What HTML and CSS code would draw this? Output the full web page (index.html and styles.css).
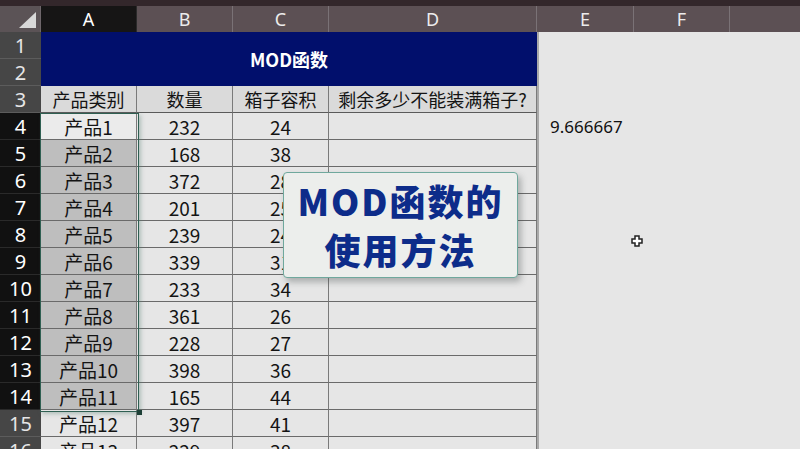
FILE: index.html
```html
<!DOCTYPE html>
<html lang="zh">
<head>
<meta charset="utf-8">
<link rel="stylesheet" href="styles.css">
</head>
<body>
<div class="topstrip"></div>
<div class="sheet">
  <div class="grid">
    <div class="corner"><svg width="41" height="26" viewBox="0 0 41 26"><polygon points="36,6 36,22 19,22" fill="#d8d8d8"/></svg></div>
    <div class="ch active">A</div>
    <div class="ch">B</div>
    <div class="ch">C</div>
    <div class="ch">D</div>
    <div class="ch">E</div>
    <div class="ch">F</div>
    <div class="ch last"></div>

    <div class="rh">1</div>
    <div class="title">MOD函数</div>
    <div class="blank span3"></div>
    <div class="rh">2</div>
    <div class="blank span3"></div>

    <div class="rh">3</div>
    <div class="c hd">产品类别</div>
    <div class="c hd">数量</div>
    <div class="c hd">箱子容积</div>
    <div class="c hd">剩余多少不能装满箱子?</div>
    <div class="blank span3"></div>

    <div class="rh sel">4</div>
    <div class="c act">产品1</div>
    <div class="c">232</div>
    <div class="c">24</div>
    <div class="c"></div>
    <div class="blank span3 val">9.666667</div>

    <div class="rh sel">5</div>
    <div class="c s">产品2</div><div class="c">168</div><div class="c">38</div><div class="c"></div><div class="blank span3"></div>
    <div class="rh sel">6</div>
    <div class="c s">产品3</div><div class="c">372</div><div class="c">28</div><div class="c"></div><div class="blank span3"></div>
    <div class="rh sel">7</div>
    <div class="c s">产品4</div><div class="c">201</div><div class="c">25</div><div class="c"></div><div class="blank span3"></div>
    <div class="rh sel">8</div>
    <div class="c s">产品5</div><div class="c">239</div><div class="c">24</div><div class="c"></div><div class="blank span3"></div>
    <div class="rh sel">9</div>
    <div class="c s">产品6</div><div class="c">339</div><div class="c">31</div><div class="c"></div><div class="blank span3"></div>
    <div class="rh sel">10</div>
    <div class="c s">产品7</div><div class="c">233</div><div class="c">34</div><div class="c"></div><div class="blank span3"></div>
    <div class="rh sel">11</div>
    <div class="c s">产品8</div><div class="c">361</div><div class="c">26</div><div class="c"></div><div class="blank span3"></div>
    <div class="rh sel">12</div>
    <div class="c s">产品9</div><div class="c">228</div><div class="c">27</div><div class="c"></div><div class="blank span3"></div>
    <div class="rh sel">13</div>
    <div class="c s">产品10</div><div class="c">398</div><div class="c">36</div><div class="c"></div><div class="blank span3"></div>
    <div class="rh sel">14</div>
    <div class="c s">产品11</div><div class="c">165</div><div class="c">44</div><div class="c"></div><div class="blank span3"></div>
    <div class="rh">15</div>
    <div class="c">产品12</div><div class="c">397</div><div class="c">41</div><div class="c"></div><div class="blank span3"></div>
    <div class="rh">16</div>
    <div class="c">产品13</div><div class="c">229</div><div class="c">38</div><div class="c"></div><div class="blank span3"></div>
  </div>
  <div class="selbox"><span class="handle"></span></div>
  <div class="card">
    <div class="card-line">MOD函数的</div>
    <div class="card-line">使用方法</div>
  </div>
  <svg class="cursor" width="12" height="12" viewBox="0 0 12 12"><path d="M4 1h4v3h3v4H8v3H4V8H1V4h3z" fill="#fff" stroke="#222" stroke-width="1.5"/></svg>
</div>
</body>
</html>
```

FILE: styles.css
```css
html, body {
  margin: 0;
  padding: 0;
  width: 800px;
  height: 449px;
  overflow: hidden;
  background: #e6e6e6;
  font-family: "Noto Sans CJK SC", "Noto Sans", sans-serif;
}
.topstrip {
  height: 6px;
  background: #33272b;
}
.sheet {
  position: relative;
}
.grid {
  display: grid;
  grid-template-columns: 41px 96px 96px 96px 208px 97px 96px 70px;
  grid-template-rows: 26px;
  grid-auto-rows: 27px;
}
.corner {
  background: #5b5356;
  border-right: 1px solid #6e666a;
  box-sizing: border-box;
}
.corner svg { display: block; }
.ch {
  background: #5c5054;
  color: #ececec;
  font-family: "Noto Sans", sans-serif;
  font-size: 18px;
  display: flex;
  align-items: center;
  justify-content: center;
  border-right: 1px solid #7a7276;
  box-sizing: border-box;
}
.ch.active {
  background: #161515;
  color: #ffffff;
  border-right: 1px solid #2a2a2a;
}
.ch.last { border-right: none; }
.rh {
  background: #464646;
  color: #e6e6e6;
  font-family: "Noto Sans", sans-serif;
  font-size: 20px;
  display: flex;
  align-items: center;
  justify-content: center;
  border-bottom: 1px solid #5c5c5c;
  box-sizing: border-box;
}
.rh.sel {
  background: #111111;
  color: #ffffff;
  border-bottom: 1px solid #2a2a2a;
}
.title {
  grid-column: 2 / span 4;
  grid-row: 2 / span 2;
  background: #010f6c;
  color: #ffffff;
  font-weight: 700;
  font-size: 18px;
  display: flex;
  align-items: center;
  justify-content: center;
}
.blank {
  background: #e6e6e6;
}
.span3 {
  grid-column: span 3;
  border-left: 2px solid #a9a9a9;
}
.val {
  font-family: "Noto Sans", sans-serif;
  font-size: 17px;
  color: #111;
  display: flex;
  align-items: center;
  padding-left: 11px;
}
.c {
  background: #e6e6e6;
  color: #141414;
  font-size: 19px;
  display: flex;
  align-items: center;
  justify-content: center;
  border-right: 1px solid #7a7a7a;
  border-bottom: 1px solid #6a6a6a;
  box-sizing: border-box;
  white-space: nowrap;
  overflow: hidden;
}
.hd {
  background: #dadada;
  font-size: 18px;
  border-bottom: 1px solid #5a5a5a;
}
.s {
  background: #bebebe;
}
.act {
  background: #ebebeb;
}
.selbox {
  position: absolute;
  left: 40px;
  top: 107px;
  width: 97px;
  height: 297px;
  border: 1px solid #2f5f52;
  box-shadow: 2px 2px 4px rgba(80, 120, 110, 0.35);
  pointer-events: none;
}
.handle {
  position: absolute;
  right: -4px;
  bottom: -4px;
  width: 5px;
  height: 5px;
  background: #1d3f36;
}
.card {
  position: absolute;
  left: 283px;
  top: 166px;
  width: 235px;
  height: 106px;
  box-sizing: border-box;
  background: #eceeec;
  border: 1.5px solid #6fa89d;
  border-radius: 4px;
  box-shadow: 3px 4px 6px rgba(60, 70, 70, 0.35);
  display: flex;
  flex-direction: column;
  align-items: center;
  justify-content: center;
  color: #0d2c8a;
  font-weight: 900;
  font-size: 36px;
  line-height: 49px;
  letter-spacing: 2px;
}
.card-line {
  white-space: nowrap;
}
.cursor {
  position: absolute;
  left: 631px;
  top: 229px;
}
```
